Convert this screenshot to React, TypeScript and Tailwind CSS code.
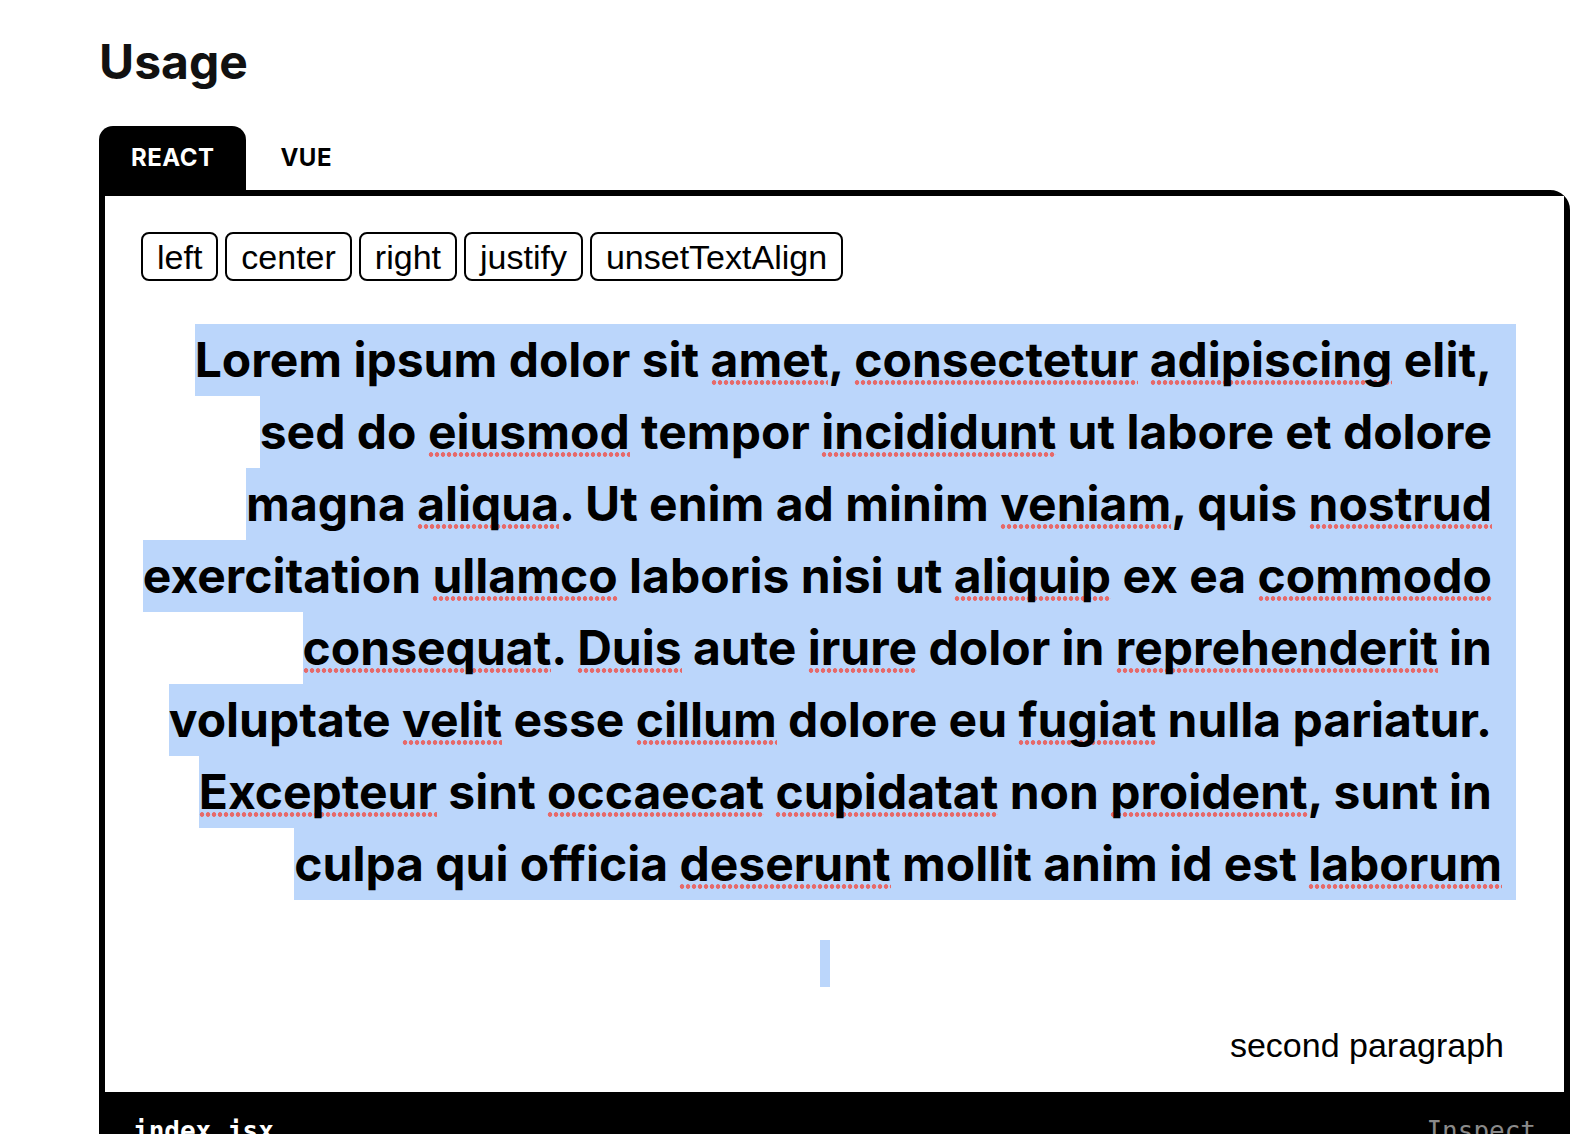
import React from "react";

// Lines of the demo paragraph; words in braces carry the spell-check squiggle.
const LINES = [
  "Lorem ipsum dolor sit {amet}, {consectetur} {adipiscing} elit,",
  "sed do {eiusmod} tempor {incididunt} ut labore et dolore",
  "magna {aliqua}. Ut enim ad minim {veniam}, quis {nostrud}",
  "exercitation {ullamco} laboris nisi ut {aliquip} ex ea {commodo}",
  "{consequat}. {Duis} aute {irure} dolor in {reprehenderit} in",
  "voluptate {velit} esse {cillum} dolore eu {fugiat} nulla pariatur.",
  "{Excepteur} sint {occaecat} {cupidatat} non {proident}, sunt in",
  "culpa qui officia {deserunt} mollit anim id est {laborum}",
];

const ALIGN_BUTTONS = ["left", "center", "right", "justify", "unsetTextAlign"];

// A word flagged by the spell checker: a row of round red dots under it,
// painted beneath the glyphs so descenders sit on top.
function Misspelled({ word }: { word: string }) {
  return (
    <span className="relative">
      {word}
      <span className="pointer-events-none absolute -z-10 left-0 right-0 top-[50px] h-[5px] bg-[radial-gradient(circle,#e66a6a_2px,transparent_2.6px)] bg-[length:6px_5px] bg-repeat-x" />
    </span>
  );
}

function Line({ text, last }: { text: string; last: boolean }) {
  const parts = text.split(/(\{[^}]+\})/).filter(Boolean);
  return (
    <div className="flex justify-end">
      <span
        className={`relative z-0 block bg-[#bbd6fb] h-[72px] leading-[72px] whitespace-pre ${
          last ? "pr-[14px]" : "pr-[24px]"
        }`}
      >
        {parts.map((p, i) =>
          p.startsWith("{") ? (
            <Misspelled key={i} word={p.slice(1, -1)} />
          ) : (
            <span key={i}>{p}</span>
          )
        )}
      </span>
    </div>
  );
}

export default function App() {
  return (
    <div className="min-h-screen bg-white pl-[99px] pr-[26px] pt-[38px] font-['Inter',sans-serif] text-black overflow-hidden">
      <h2 className="text-[48px] leading-[48px] font-bold text-[#111]">Usage</h2>

      <div className="mt-[40px] flex items-stretch">
        <div className="h-[64px] flex items-center px-8 bg-black text-white rounded-t-[14px] text-[24px] font-bold tracking-[0.02em]">
          REACT
        </div>
        <div className="h-[64px] flex items-center px-[34px] text-black text-[24px] font-bold tracking-[0.02em]">
          VUE
        </div>
      </div>

      <div className="border-[6px] border-black rounded-tr-[20px] bg-black">
        <div className="bg-white pl-[36px] pr-[48px] pt-[36px] pb-[27px]">
          <div className="flex gap-[7px] font-['Liberation_Sans',Arial,sans-serif]">
            {ALIGN_BUTTONS.map((b) => (
              <button
                key={b}
                className="h-[49px] px-[14px] border-2 border-black rounded-[8px] bg-white text-[34px] leading-none text-black"
              >
                {b}
              </button>
            ))}
          </div>

          <div className="mt-[43px] text-[48px] font-bold">
            {LINES.map((l, i) => (
              <Line key={i} text={l} last={i === LINES.length - 1} />
            ))}
          </div>

          <div className="mt-[40px] flex justify-center pr-[8px]">
            <span className="block w-[10px] h-[47px] bg-[#bbd6fb]" />
          </div>

          <p className="mt-[38px] pr-[12px] text-right font-['Liberation_Sans',Arial,sans-serif] text-[34px] leading-[40px]">
            second paragraph
          </p>
        </div>

        <div className="bg-black px-[28px] pt-[24px] pb-[40px] flex items-start justify-between font-['DejaVu_Sans_Mono',monospace] text-[26px] leading-[30px]">
          <span className="text-white font-bold">index.jsx</span>
          <span className="text-[#8a8a8a]">Inspect</span>
        </div>
      </div>
    </div>
  );
}
